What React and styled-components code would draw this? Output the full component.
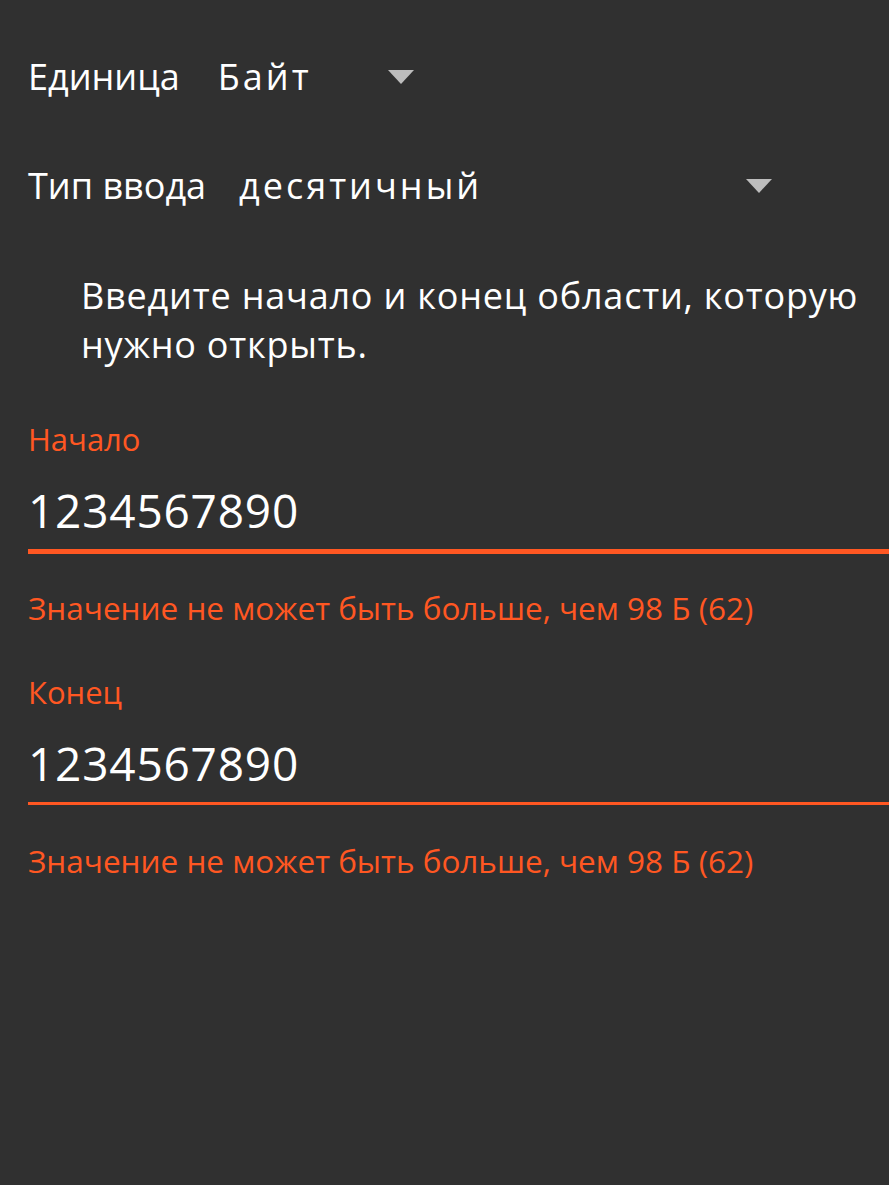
import React from "react";
import styled, { createGlobalStyle } from "styled-components";

const ORANGE = "#ff5722";

const GlobalStyle = createGlobalStyle`
  html, body {
    margin: 0;
    padding: 0;
    background: #303030;
  }
  body {
    font-family: "Open Sans", Roboto, sans-serif;
    color: #ffffff;
    overflow: hidden;
  }
`;

const Page = styled.div`
  width: 889px;
  height: 1185px;
  background: #303030;
  overflow: hidden;
  padding-top: 53px;
  box-sizing: border-box;
`;

const SpinnerRow = styled.div`
  display: flex;
  align-items: center;
  height: 48px;
  padding-left: 28px;
  margin-bottom: ${(p) => p.$gap || 0}px;
`;

const RowLabel = styled.div`
  font-size: 36px;
  line-height: 48px;
  color: #ffffff;
  margin-right: ${(p) => p.$space}px;
  white-space: nowrap;
`;

const Spinner = styled.div`
  display: flex;
  align-items: center;
  justify-content: space-between;
  width: ${(p) => p.$width}px;
  font-size: 36px;
  line-height: 48px;
  letter-spacing: 3px;
  color: #ffffff;
`;

const Arrow = styled.span`
  width: 0;
  height: 0;
  margin-top: ${(p) => p.$shift || 0}px;
  border-left: 13px solid transparent;
  border-right: 13px solid transparent;
  border-top: 14px solid #bdbdbd;
`;

const Message = styled.p`
  margin: 0;
  padding: 0 28px 0 81px;
  font-size: 36px;
  line-height: 49px;
  letter-spacing: 0.8px;
  color: #ffffff;
`;

const Field = styled.div`
  display: flex;
  flex-direction: column;
  padding-left: 28px;
  margin-top: ${(p) => p.$top}px;
`;

const FieldLabel = styled.div`
  font-size: 31px;
  line-height: 36px;
  color: ${ORANGE};
`;

const FieldValue = styled.div`
  font-size: 46px;
  line-height: 56px;
  letter-spacing: 0.8px;
  color: #ffffff;
  padding-top: 25px;
  padding-bottom: 11px;
  border-bottom: ${(p) => (p.$focused ? 5 : 3)}px solid ${ORANGE};
  margin-right: -40px;
`;

const FieldError = styled.div`
  font-size: 31.5px;
  line-height: 36px;
  color: ${ORANGE};
  margin-top: ${(p) => (p.$focused ? 36 : 38)}px;
`;

const fields = [
  { label: "Начало", value: "1234567890", focused: true, top: 52 },
  { label: "Конец", value: "1234567890", focused: false, top: 48 },
];

export default function App() {
  return (
    <Page>
      <GlobalStyle />
      <SpinnerRow $gap={61}>
        <RowLabel $space={38}>Единица</RowLabel>
        <Spinner $width={196}>
          Байт
          <Arrow />
        </Spinner>
      </SpinnerRow>
      <SpinnerRow $gap={61}>
        <RowLabel $space={33}>Тип ввода</RowLabel>
        <Spinner $width={533}>
          десятичный
          <Arrow />
        </Spinner>
      </SpinnerRow>
      <Message>Введите начало и конец области, которую нужно открыть.</Message>
      {fields.map((f, i) => (
        <Field key={i} $top={f.top}>
          <FieldLabel>{f.label}</FieldLabel>
          <FieldValue $focused={f.focused}>{f.value}</FieldValue>
          <FieldError $focused={f.focused}>
            Значение не может быть больше, чем 98 Б (62)
          </FieldError>
        </Field>
      ))}
    </Page>
  );
}
